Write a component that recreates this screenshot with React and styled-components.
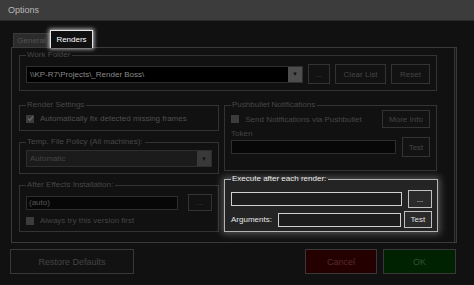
import React from "react";
import styled, { createGlobalStyle, css } from "styled-components";

const Global = createGlobalStyle`
  html, body { margin: 0; padding: 0; background: #111; }
  body { font-family: "Liberation Sans", Arial, sans-serif; font-size: 8px; }
  * { box-sizing: border-box; }
`;

const Window = styled.div`
  width: 474px;
  height: 285px;
  background: #111111;
  display: flex;
  flex-direction: column;
  overflow: hidden;
`;

const TitleBar = styled.div`
  height: 21px;
  flex: none;
  background: #3c3c3c;
  border-bottom: 1px solid #2a2a2a;
  display: flex;
  align-items: center;
  padding-left: 8px;
  color: #b8b8b8;
  font-size: 9px;
`;

const Body = styled.div`
  flex: 1;
  display: flex;
  flex-direction: column;
  padding: 8px 0 0 0;
`;

const TabRow = styled.div`
  display: flex;
  align-items: flex-end;
  padding-left: 13px;
  height: 18px;
  position: relative;
  z-index: 2;
`;

const Tab = styled.div`
  display: flex;
  align-items: center;
  justify-content: center;
  border: 1px solid #3a3a3a;
  border-bottom: none;
  ${(p) =>
    p.$active
      ? css`
          width: 43px;
          height: 18px;
          background: #101010;
          color: #ffffff;
          border-color: #e6e6e6;
          box-shadow: 0 0 4px 1px rgba(255, 255, 255, 0.75);
          margin-bottom: -1px;
        `
      : css`
          width: 37px;
          height: 14px;
          background: #2b2b2b;
          color: #545454;
        `}
`;

const Page = styled.div`
  margin-left: 11px;
  width: 446px;
  height: 196px;
  border: 1px solid #3a3a3a;
  box-shadow: inset -1px 0 0 #1a1a1a, inset -2px 0 0 #333;
  padding: 2px 18px 0 7px;
  display: flex;
  flex-direction: column;
`;

const Group = styled.fieldset`
  margin: 0;
  min-width: 0;
  border: 1px solid #333;
  padding: 0 6px;
  height: ${(p) => p.$h}px;
  width: ${(p) => p.$w}px;
  display: flex;
  flex-direction: column;
  ${(p) =>
    p.$hl &&
    css`
      border-color: #b4b4b4;
      background: #242424;
      box-shadow: 0 0 7px 2px rgba(255, 255, 255, 0.28);
    `}
`;

const Legend = styled.legend`
  padding: 0 2px 0 1px;
  margin-left: 0;
  line-height: 10px;
  color: ${(p) => (p.$hl ? "#ececec" : "#474747")};
`;

const Row = styled.div`
  display: flex;
  align-items: center;
  gap: ${(p) => p.$gap ?? 4}px;
  margin-top: ${(p) => p.$mt ?? 0}px;
`;

const Combo = styled.div`
  width: ${(p) => p.$w}px;
  height: 17px;
  display: flex;
  border: 1px solid #2e2e2e;
  background: ${(p) => p.$bg};
  color: ${(p) => p.$fg};
`;

const ComboText = styled.div`
  flex: 1;
  display: flex;
  align-items: center;
  padding-left: 3px;
  white-space: nowrap;
`;

const ComboArrow = styled.div`
  width: 14px;
  background: ${(p) => p.$bg};
  display: flex;
  align-items: center;
  justify-content: center;
  color: #111;
  font-size: 6px;
`;

const Button = styled.div`
  width: ${(p) => p.$w}px;
  height: ${(p) => p.$h}px;
  flex: none;
  display: flex;
  align-items: center;
  justify-content: center;
  border: 1px solid #333;
  background: #121212;
  color: #454545;
  ${(p) =>
    p.$hl &&
    css`
      border-color: #c0c0c0;
      background: #2a2a2a;
      color: #e0e0e0;
    `}
`;

const Field = styled.div`
  width: ${(p) => p.$w}px;
  height: 14px;
  flex: none;
  display: flex;
  align-items: center;
  padding-left: 2px;
  border: 1px solid #2e2e2e;
  background: #070707;
  color: #555;
  ${(p) =>
    p.$hl &&
    css`
      border-color: #cfcfcf;
      background: #1c1c1c;
    `}
`;

const Columns = styled.div`
  display: flex;
  gap: 5px;
  margin-top: 9px;
`;

const Column = styled.div`
  display: flex;
  flex-direction: column;
  gap: ${(p) => p.$gap}px;
`;

const Check = styled.div`
  width: 8px;
  height: 8px;
  flex: none;
  background: #3b3b3b;
  display: flex;
  align-items: center;
  justify-content: center;
`;

const DimText = styled.span`
  color: ${(p) => p.$c ?? "#4b4b4b"};
  white-space: nowrap;
`;

const Spacer = styled.div`
  flex: 1;
`;

const Footer = styled.div`
  display: flex;
  align-items: center;
  padding: 0 18px 0 10px;
  margin-top: 6px;
  gap: 6px;
`;

const FooterButton = styled.div`
  width: ${(p) => p.$w}px;
  height: 25px;
  display: flex;
  align-items: center;
  justify-content: center;
  font-size: 9px;
  border: 1px solid #383838;
  background: ${(p) => p.$bg};
  color: ${(p) => p.$fg};
`;

const Tick = () => (
  <svg width="7" height="7" viewBox="0 0 7 7">
    <path d="M1 3.6 L2.8 5.4 L6 1.4" stroke="#6a6a6a" strokeWidth="1.3" fill="none" />
  </svg>
);

export default function App() {
  return (
    <>
      <Global />
      <Window>
        <TitleBar>Options</TitleBar>
        <Body>
          <TabRow>
            <Tab>General</Tab>
            <Tab $active>Renders</Tab>
          </TabRow>
          <Page>
            <Group $h={41} $w={418}>
              <Legend>Work Folder</Legend>
              <Row $mt={4} $gap={5}>
                <Combo $w={279} $bg="#000" $fg="#8a8a8a">
                  <ComboText>\\KP-R7\Projects\_Render Boss\</ComboText>
                  <ComboArrow $bg="#4d4d4d">▼</ComboArrow>
                </Combo>
                <Button $w={22} $h={20}>...</Button>
                <Button $w={51} $h={20}>Clear List</Button>
                <Button $w={39} $h={20}>Reset</Button>
              </Row>
            </Group>
            <Columns>
              <Column $gap={6}>
                <Group $h={31} $w={200}>
                  <Legend>Render Settings</Legend>
                  <Row $mt={4} $gap={6}>
                    <Check>
                      <Tick />
                    </Check>
                    <DimText $c="#505050">Automatically fix detected missing frames</DimText>
                  </Row>
                </Group>
                <Group $h={37} $w={200}>
                  <Legend>Temp. File Policy (All machines):</Legend>
                  <Row $mt={3}>
                    <Combo $w={187} $bg="#1b1b1b" $fg="#444">
                      <ComboText>Automatic</ComboText>
                      <ComboArrow $bg="#393939">▼</ComboArrow>
                    </Combo>
                  </Row>
                </Group>
                <Group $h={52} $w={200}>
                  <Legend>After Effects Installation:</Legend>
                  <Row $mt={4} $gap={10}>
                    <Field $w={152}>(auto)</Field>
                    <Button $w={24} $h={17}>...</Button>
                  </Row>
                  <Row $mt={5} $gap={6}>
                    <Check />
                    <DimText $c="#444">Always try this version first</DimText>
                  </Row>
                </Group>
              </Column>
              <Column $gap={3}>
                <Group $h={71} $w={213}>
                  <Legend>Pushbullet Notifications</Legend>
                  <Row $mt={0}>
                    <Check />
                    <DimText $c="#474747">&nbsp;Send Notifications via Pushbullet</DimText>
                    <Spacer />
                    <Button $w={48} $h={18}>More Info</Button>
                  </Row>
                  <Row $mt={1}>
                    <DimText $c="#444">Token</DimText>
                  </Row>
                  <Row $mt={-1} $gap={6}>
                    <Field $w={165} />
                    <Button $w={28} $h={20}>Test</Button>
                  </Row>
                </Group>
                <Group $h={58} $w={214} $hl>
                  <Legend $hl>Execute after each render:</Legend>
                  <Row $mt={6} $gap={6}>
                    <Field $w={171} $hl />
                    <Button $w={24} $h={18} $hl>...</Button>
                  </Row>
                  <Row $mt={3} $gap={3}>
                    <DimText $c="#e4e4e4">Arguments:</DimText>
                    <Spacer />
                    <Field $w={123} $hl />
                    <Button $w={28} $h={17} $hl>Test</Button>
                  </Row>
                </Group>
              </Column>
            </Columns>
          </Page>
          <Footer>
            <FooterButton $w={124} $bg="#121212" $fg="#444">Restore Defaults</FooterButton>
            <Spacer />
            <FooterButton $w={72} $bg="#240000" $fg="#5a2a2a">Cancel</FooterButton>
            <FooterButton $w={73} $bg="#002200" $fg="#2d552d">OK</FooterButton>
          </Footer>
        </Body>
      </Window>
    </>
  );
}
